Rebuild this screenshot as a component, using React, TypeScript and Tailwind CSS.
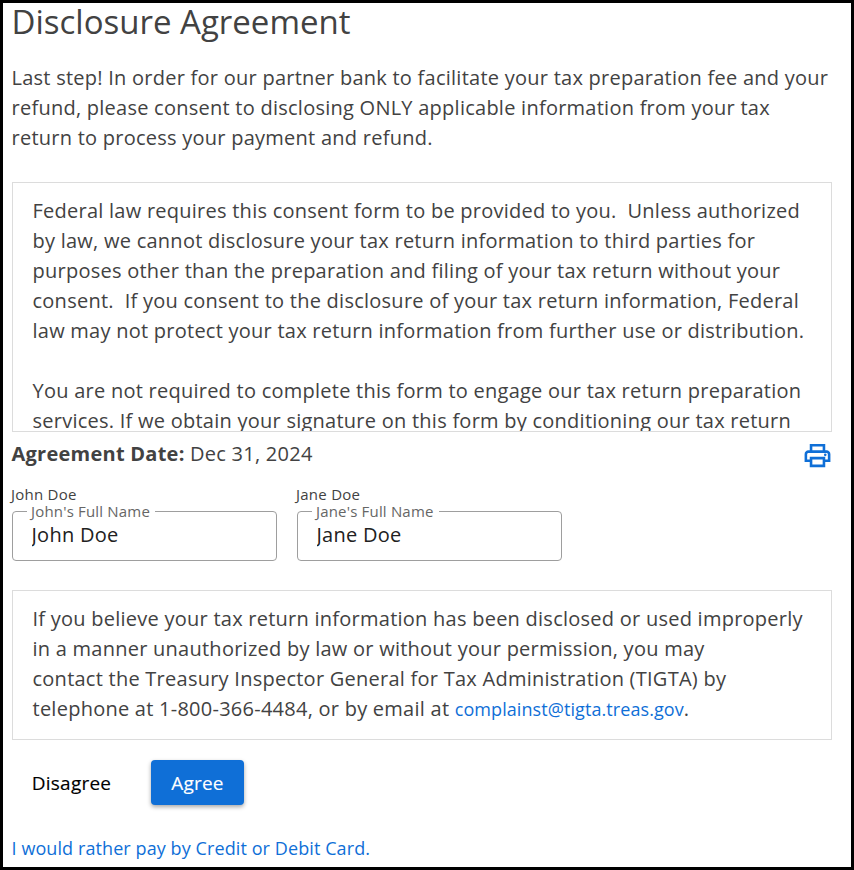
import { MdOutlinePrint } from "react-icons/md";

interface NameFieldProps {
    signer: string;
    label: string;
}

function NameField({ signer, label }: NameFieldProps) {
    return (
        <div className="w-[265px]">
            <div className="-ml-px h-[17px] pt-px text-[15px] leading-[17px] tracking-[0.25px] whitespace-nowrap">{signer}</div>
            <div className="relative mt-[9px] h-[50px] rounded border border-[#9e9e9e]">
                <label className="absolute -top-[9px] left-[14px] bg-white pr-[5px] pl-1 text-[15px] leading-[17px] tracking-[0.18px] whitespace-nowrap text-[#666]">
                    {label}
                </label>
                <input
                    defaultValue={signer}
                    className="block h-[44px] w-full bg-transparent px-[18.5px] text-[20px] tracking-[0.25px] text-[#212121] outline-none"
                />
            </div>
        </div>
    );
}

export default function App() {
    return (
        <div className="h-[870px] w-[854px] border-[3px] border-black bg-white pl-[9px] font-['Open_Sans',sans-serif] text-[20px] leading-[30px] tracking-[0.25px] text-[#424242]">
            <h1 className="-ml-[0.5px] h-[60px] text-[33px] leading-[38px] tracking-normal">Disclosure Agreement</h1>
            <p className="-ml-[0.5px] whitespace-nowrap">
                Last step! In order for our partner bank to facilitate your tax preparation fee and your
                <br />
                refund, please consent to disclosing ONLY applicable information from your tax
                <br />
                return to process your payment and refund.
            </p>

            <div className="mt-[29px] h-[250px] w-[820px] overflow-hidden border border-[#dcdcdc] px-[19.5px] pt-[13px] whitespace-nowrap">
                <p>
                    Federal law requires this consent form to be provided to you.&nbsp; Unless authorized
                    <br />
                    by law, we cannot disclosure your tax return information to third parties for
                    <br />
                    purposes other than the preparation and filing of your tax return without your
                    <br />
                    consent.&nbsp; If you consent to the disclosure of your tax return information, Federal
                    <br />
                    law may not protect your tax return information from further use or distribution.
                </p>
                <p className="mt-[30px]">
                    You are not required to complete this form to engage our tax return preparation
                    <br />
                    services. If we obtain your signature on this form by conditioning our tax return
                </p>
            </div>

            <div className="flex h-[53px] w-[821px] justify-between pt-[7px]">
                <div className="-ml-[0.5px]">
                    <strong className="font-bold">Agreement Date:</strong> Dec 31, 2024
                </div>
                <button aria-label="Print" className="mt-px h-[31px] text-[#0f6fd7]">
                    <MdOutlinePrint className="size-[31px]" />
                </button>
            </div>

            <div className="flex gap-[20px]">
                <NameField signer="John Doe" label="John's Full Name" />
                <NameField signer="Jane Doe" label="Jane's Full Name" />
            </div>

            <div className="mt-[29px] h-[150px] w-[820px] border border-[#dcdcdc] px-[19.5px] pt-[13px] whitespace-nowrap">
                If you believe your tax return information has been disclosed or used improperly
                <br />
                in a manner unauthorized by law or without your permission, you may
                <br />
                contact the Treasury Inspector General for Tax Administration (TIGTA) by
                <br />
                telephone at 1-800-366-4484, or by email at{" "}
                <a href="#" className="text-[18px] tracking-[0.08px] text-[#0f6fd7]">complainst@tigta.treas.gov</a>.
            </div>

            <div className="mt-[20px] flex h-[45px] items-center text-[19px] font-medium tracking-[0.22px] [-webkit-text-stroke:0.12px_currentColor]">
                <button className="h-[45px] w-[119px] text-black">Disagree</button>
                <button className="ml-[20px] h-[45px] w-[93px] rounded bg-[#0f6fd7] text-white shadow-[0_2px_4px_rgba(0,0,0,0.35)]">
                    Agree
                </button>
            </div>

            <a href="#" className="mt-[28px] -ml-[0.5px] block text-[18px] leading-[30px] tracking-[0.09px] text-[#0f6fd7]">
                I would rather pay by Credit or Debit Card.
            </a>
        </div>
    );
}
